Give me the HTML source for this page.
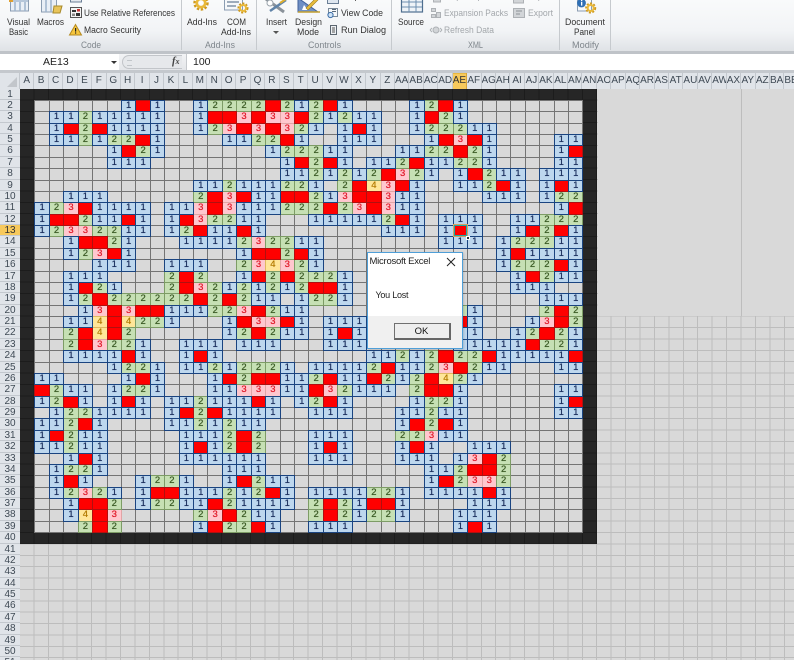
<!DOCTYPE html>
<html><head><meta charset="utf-8"><title>Excel Minesweeper</title>
<style>
html,body{margin:0;padding:0;width:794px;height:660px;overflow:hidden;background:#d6d9dd;font-family:"Liberation Sans",sans-serif}
#w{position:relative;width:794px;height:660px;overflow:hidden;filter:blur(.3px)}
.ab{position:absolute}
svg text{font-family:"Liberation Sans",sans-serif;font-size:9.5px;fill:#333}
svg text.g{fill:#7f868c}
svg text.d{fill:#a3a7ab}
#ch{position:absolute;left:20px;top:73px;width:780px;height:15.5px;display:grid;grid-template-columns:repeat(54,14.43px);background:#e0e4e9}
#ch span{font-size:10px;line-height:15px;text-align:center;color:#3f4a55;border-right:1px solid #c3c8ce;overflow:hidden;box-sizing:border-box;white-space:nowrap}
#ch span.h{background:#f7c95c;color:#333;border-right:1px solid #d6a53a;box-shadow:inset 0 1px #e8b840}
#rh{position:absolute;left:0;top:88.5px;width:20px;display:grid;grid-template-rows:repeat(51,11.385px);background:#e0e4e9}
#rh span{font-size:10px;line-height:11px;text-align:center;color:#3f4a55;border-bottom:1px solid #c3c8ce;box-sizing:border-box;overflow:hidden}
#rh span.h{background:#f7c95c;color:#333}
#sheet{position:absolute;left:20px;top:88.5px;width:774px;height:572px;background-color:#d9d9d9;background-image:repeating-linear-gradient(90deg,transparent 0,transparent 13.43px,#bdbdbd 13.43px,#bdbdbd 14.43px),repeating-linear-gradient(180deg,transparent 0,transparent 10.385px,#bdbdbd 10.385px,#bdbdbd 11.385px)}
#frame{position:absolute;left:20px;top:88.5px;width:577.2px;height:455.4px;background-color:#262626;background-image:repeating-linear-gradient(90deg,transparent 0,transparent 13.43px,#1c1c1c 13.43px,#1c1c1c 14.43px),repeating-linear-gradient(180deg,transparent 0,transparent 10.385px,#1c1c1c 10.385px,#1c1c1c 11.385px)}
#g{position:absolute;left:34.43px;top:99.885px;width:549px}
.r{display:grid;grid-template-columns:repeat(38,14.43px);grid-template-rows:11.385px;height:11.385px}
.r>*{display:block;margin:0 -1px -1px 0;box-sizing:border-box;border:1px solid #747474;font-size:9.5px;line-height:9.4px;text-align:center;font-style:normal;font-weight:400;text-decoration:none;position:relative;background:#d9d9d9;overflow:hidden;text-shadow:0 0 .5px currentColor}
.r a{background:#bdd7ee;border-color:#1a4480;color:#1b2f5e;z-index:4}
.r b{background:#c6e0b4;border-color:#7d9c66;color:#3a5a24;z-index:2}
.r s{background:#ffc7ce;border-color:#e0a5a5;color:#e01a2a;z-index:1}
.r u{background:#ffe699;border-color:#e0b860;color:#b27a00;z-index:1}
.r i{background:#ff0000;border-color:#b01010;z-index:3}
</style></head><body><div id="w">

<div class="ab" style="left:0;top:0;width:794px;height:51px;background:linear-gradient(#f9fafb,#f2f4f6 60%,#dfe2e6)"></div>
<div class="ab" style="left:0;top:51px;width:794px;height:3px;background:#bfc3c8"></div>
<svg class="ab" style="left:0;top:0" width="794" height="51" viewBox="0 0 794 51">
<g stroke="#c6cace" stroke-width="1"><path d="M181.5 0V50M256.5 0V50M391.5 0V50M559.5 0V50M610.5 0V50"/></g>
<rect x="10.5" y="-3" width="18" height="14" fill="#e9eff6" stroke="#8b9db2"/><path d="M15 0V11M20 0V11M25 0V11" stroke="#9db3cc" stroke-width="1.5"/><path d="M10 1H28" stroke="#b6c7da" stroke-width="2"/><rect x="9" y="0" width="4" height="2" fill="#e0a030"/>
<rect x="41.5" y="-3" width="15" height="15" fill="#e9eff6" stroke="#8b9db2"/><path d="M46 0V12M51 0V12" stroke="#9db3cc" stroke-width="1.5"/><path d="M54 6H62L60 13H53Z" fill="#e8c45a" stroke="#a88a2a"/>
<rect x="70.5" y="7.5" width="11" height="10" fill="#f4f4f4" stroke="#555"/><path d="M72 10H76V12H72ZM76 13H80V16H76Z" fill="#333"/><rect x="77" y="9" width="3" height="2.5" fill="#c83030"/><rect x="72" y="13.5" width="3" height="2.5" fill="#888"/>
<path d="M75.5 24.5L81.5 35H69.5Z" fill="#f6c63e" stroke="#b58a20"/><rect x="75" y="28" width="1.2" height="3.6" fill="#222"/><rect x="75" y="32.4" width="1.2" height="1.2" fill="#222"/>
<circle cx="201" cy="3" r="6.5" fill="none" stroke="#cf9a1e" stroke-width="2.4" stroke-dasharray="2.4 1.6"/><circle cx="201" cy="3" r="4.2" fill="none" stroke="#e9b93a" stroke-width="2.6"/><circle cx="201" cy="3" r="1.8" fill="#fff"/>
<rect x="224.5" y="-3" width="18" height="13" fill="#f6f8fa" stroke="#8b9db2"/><path d="M227 2H239M227 6H236" stroke="#6a7f96" stroke-width="1.2"/><circle cx="243" cy="8" r="4.5" fill="none" stroke="#cf9a1e" stroke-width="2" stroke-dasharray="2 1.4"/><circle cx="243" cy="8" r="3" fill="none" stroke="#e9b93a" stroke-width="2"/>
<path d="M266 -1L284 12" stroke="#8a929a" stroke-width="3"/><path d="M286 0L270 11" stroke="#5f83a8" stroke-width="2.5"/><circle cx="270" cy="3" r="3" fill="#fff" stroke="#9aa3ab"/><path d="M280 3L286 -1" stroke="#e0b030" stroke-width="2"/>
<path d="M298 -2L298 12H318Z" fill="#6f8fc4" stroke="#40609a"/><path d="M302 10L304 5L308 10Z" fill="#fff"/><path d="M306 8L316 -2L318 0L308 10Z" fill="#e7bc3c" stroke="#9b7a1c" stroke-width=".6"/><path d="M298 12H320" stroke="#c4a030" stroke-width="1.5"/>
<rect x="327.5" y="-3" width="11" height="6.5" fill="#dfe7f0" stroke="#6b7f96"/>
<rect x="328.5" y="8.5" width="9" height="8" fill="#f6f8fa" stroke="#7a8a9a"/><circle cx="330.5" cy="15" r="2.6" fill="#cfe2f5" stroke="#3c6ea8"/><path d="M332 9.5H336M332 11.5H336" stroke="#5a6a7a"/>
<rect x="330.5" y="25.5" width="6" height="9" fill="#eef1f4" stroke="#5c6670"/><path d="M332 28H335M332 30H335M332 32H335" stroke="#555"/>
<rect x="401.5" y="-3" width="21" height="15" fill="#eef3f8" stroke="#4f6f8f" stroke-width="1.2"/><path d="M402 2H422M402 7H422M409 -3V12M416 -3V12" stroke="#6d8fb0"/>
<g stroke="#adb1b5" fill="#d2d5d8"><rect x="431.5" y="8.5" width="4" height="3"/><rect x="436.5" y="12.5" width="4" height="5"/><rect x="431.5" y="14.5" width="4" height="3"/><rect x="433.5" y="-3" width="7" height="5"/><rect x="513.5" y="8.5" width="11" height="9"/><circle cx="436" cy="30" r="3"/><rect x="513.5" y="-3" width="10" height="6"/></g>
<path d="M430 30L432 28M430 30L432 32M442 30L440 28M442 30L440 32" stroke="#adb1b5" fill="none"/>
<path d="M516 11H522M516 14H520" stroke="#8f9397"/>
<text x="444" y="-1" class="d" textLength="60" lengthAdjust="spacingAndGlyphs">Map Properties</text>
<text x="528" y="-1" class="d" textLength="25" lengthAdjust="spacingAndGlyphs">Import</text>
<text x="341" y="-1" textLength="40" lengthAdjust="spacingAndGlyphs">Properties</text>
<rect x="70.5" y="-4" width="11" height="6" fill="#e5e9ee" stroke="#6b7f96"/>
<rect x="577.5" y="-3" width="14" height="14" fill="#f6f8fa" stroke="#8b9db2"/><circle cx="581.5" cy="3" r="4.4" fill="#2f6fb5"/><rect x="581" y="2" width="1.3" height="3.6" fill="#fff"/><rect x="581" y="0" width="1.3" height="1.2" fill="#fff"/><circle cx="590.7" cy="8" r="4.5" fill="none" stroke="#cf9a1e" stroke-width="2" stroke-dasharray="2 1.4"/><circle cx="590.7" cy="8" r="3" fill="none" stroke="#e9b93a" stroke-width="2"/>
<path d="M273 31H279L276 34Z" fill="#555"/>
<text x="7" y="25" textLength="23" lengthAdjust="spacingAndGlyphs">Visual</text>
<text x="9" y="35" textLength="19" lengthAdjust="spacingAndGlyphs">Basic</text>
<text x="37" y="25" textLength="27" lengthAdjust="spacingAndGlyphs">Macros</text>
<text x="84" y="16" textLength="91" lengthAdjust="spacingAndGlyphs">Use Relative References</text>
<text x="84" y="33" textLength="57" lengthAdjust="spacingAndGlyphs">Macro Security</text>
<text x="81" y="48" class="g" textLength="20" lengthAdjust="spacingAndGlyphs">Code</text>
<text x="187" y="25" textLength="30" lengthAdjust="spacingAndGlyphs">Add-Ins</text>
<text x="227" y="25" textLength="19" lengthAdjust="spacingAndGlyphs">COM</text>
<text x="221" y="35" textLength="30" lengthAdjust="spacingAndGlyphs">Add-Ins</text>
<text x="205" y="48" class="g" textLength="30" lengthAdjust="spacingAndGlyphs">Add-Ins</text>
<text x="266" y="25" textLength="21" lengthAdjust="spacingAndGlyphs">Insert</text>
<text x="295" y="25" textLength="27" lengthAdjust="spacingAndGlyphs">Design</text>
<text x="297" y="35" textLength="22" lengthAdjust="spacingAndGlyphs">Mode</text>
<text x="341" y="16" textLength="42" lengthAdjust="spacingAndGlyphs">View Code</text>
<text x="341" y="33" textLength="45" lengthAdjust="spacingAndGlyphs">Run Dialog</text>
<text x="308" y="48" class="g" textLength="33" lengthAdjust="spacingAndGlyphs">Controls</text>
<text x="398" y="25" textLength="26" lengthAdjust="spacingAndGlyphs">Source</text>
<text x="444" y="16" class="d" textLength="64" lengthAdjust="spacingAndGlyphs">Expansion Packs</text>
<text x="528" y="16" class="d" textLength="25" lengthAdjust="spacingAndGlyphs">Export</text>
<text x="444" y="33" class="d" textLength="50" lengthAdjust="spacingAndGlyphs">Refresh Data</text>
<text x="468" y="48" class="g" textLength="15" lengthAdjust="spacingAndGlyphs">XML</text>
<text x="565" y="25" textLength="40" lengthAdjust="spacingAndGlyphs">Document</text>
<text x="574" y="35" textLength="21" lengthAdjust="spacingAndGlyphs">Panel</text>
<text x="572" y="48" class="g" textLength="27" lengthAdjust="spacingAndGlyphs">Modify</text>
</svg>

<div class="ab" style="left:0;top:54px;width:794px;height:16px;background:#fff"></div>
<div class="ab" style="left:119px;top:54px;width:67px;height:16px;background:linear-gradient(#f2f3f5,#e4e6e9)"></div>
<div class="ab" style="left:122px;top:55px;width:60px;height:14px;border-radius:7px 0 0 7px;border:1px solid #c2c5c9;border-right:0;background:#e6e8eb;box-sizing:border-box"></div>
<div class="ab" style="left:127px;top:59.5px;width:5px;height:4px;border-top:1px solid #c2c6ca;border-bottom:1px solid #c2c6ca"></div>
<div class="ab" style="left:43px;top:55px;width:24px;font-size:10.5px;line-height:15px;color:#222">AE13</div>
<div class="ab" style="left:111px;top:61px;width:0;height:0;border:3px solid transparent;border-top:3.5px solid #333"></div>
<div class="ab" style="left:172px;top:55px;font:italic bold 10.5px/14px 'Liberation Serif',serif;color:#444">f<span style="font-size:8px">x</span></div>
<div class="ab" style="left:186px;top:54px;width:1px;height:16px;background:#c6c9cd"></div>
<div class="ab" style="left:193px;top:55px;font-size:10.5px;line-height:15px;color:#222">100</div>
<div class="ab" style="left:0;top:70px;width:794px;height:3px;background:#c4c8cd"></div>

<div id="ch"><span>A</span><span>B</span><span>C</span><span>D</span><span>E</span><span>F</span><span>G</span><span>H</span><span>I</span><span>J</span><span>K</span><span>L</span><span>M</span><span>N</span><span>O</span><span>P</span><span>Q</span><span>R</span><span>S</span><span>T</span><span>U</span><span>V</span><span>W</span><span>X</span><span>Y</span><span>Z</span><span>AA</span><span>AB</span><span>AC</span><span>AD</span><span class="h">AE</span><span>AF</span><span>AG</span><span>AH</span><span>AI</span><span>AJ</span><span>AK</span><span>AL</span><span>AM</span><span>AN</span><span>AO</span><span>AP</span><span>AQ</span><span>AR</span><span>AS</span><span>AT</span><span>AU</span><span>AV</span><span>AW</span><span>AX</span><span>AY</span><span>AZ</span><span>BA</span><span>BB</span></div>
<div class="ab" style="left:0;top:73px;width:20px;height:15.5px;background:#e0e4e9;border-right:1px solid #c3c8ce;box-sizing:border-box"></div>
<div class="ab" style="left:7px;top:77px;width:0;height:0;border-left:10px solid transparent;border-bottom:10px solid #c2c6cb"></div>
<div id="rh"><span>1</span><span>2</span><span>3</span><span>4</span><span>5</span><span>6</span><span>7</span><span>8</span><span>9</span><span>10</span><span>11</span><span>12</span><span class="h">13</span><span>14</span><span>15</span><span>16</span><span>17</span><span>18</span><span>19</span><span>20</span><span>21</span><span>22</span><span>23</span><span>24</span><span>25</span><span>26</span><span>27</span><span>28</span><span>29</span><span>30</span><span>31</span><span>32</span><span>33</span><span>34</span><span>35</span><span>36</span><span>37</span><span>38</span><span>39</span><span>40</span><span>41</span><span>42</span><span>43</span><span>44</span><span>45</span><span>46</span><span>47</span><span>48</span><span>49</span><span>50</span><span>51</span></div>

<div id="sheet"></div>
<div class="ab" style="left:598px;top:88.5px;width:196px;height:227.7px;background:#d9d9d9"></div>
<div class="ab" style="left:741px;top:88.5px;width:1px;height:227.7px;background:#bdbdbd"></div>
<div id="frame"></div>

<div id="g">
<div class="r"><p></p><p></p><p></p><p></p><p></p><p></p><a>1</a><i></i><a>1</a><p></p><p></p><a>1</a><b>2</b><b>2</b><b>2</b><b>2</b><i></i><b>2</b><a>1</a><b>2</b><i></i><a>1</a><p></p><p></p><p></p><p></p><a>1</a><b>2</b><i></i><a>1</a><p></p><p></p><p></p><p></p><p></p><p></p><p></p><p></p></div>
<div class="r"><p></p><a>1</a><a>1</a><b>2</b><a>1</a><a>1</a><a>1</a><a>1</a><a>1</a><p></p><p></p><a>1</a><i></i><i></i><s>3</s><i></i><s>3</s><s>3</s><i></i><b>2</b><a>1</a><b>2</b><a>1</a><a>1</a><p></p><p></p><a>1</a><i></i><b>2</b><a>1</a><p></p><p></p><p></p><p></p><p></p><p></p><p></p><p></p></div>
<div class="r"><p></p><a>1</a><i></i><b>2</b><i></i><a>1</a><a>1</a><a>1</a><a>1</a><p></p><p></p><a>1</a><b>2</b><s>3</s><i></i><s>3</s><i></i><s>3</s><b>2</b><a>1</a><p></p><a>1</a><i></i><a>1</a><p></p><p></p><a>1</a><b>2</b><b>2</b><b>2</b><a>1</a><a>1</a><p></p><p></p><p></p><p></p><p></p><p></p></div>
<div class="r"><p></p><a>1</a><a>1</a><b>2</b><a>1</a><b>2</b><b>2</b><i></i><a>1</a><p></p><p></p><p></p><p></p><a>1</a><a>1</a><b>2</b><b>2</b><i></i><a>1</a><p></p><p></p><a>1</a><a>1</a><a>1</a><p></p><p></p><p></p><a>1</a><i></i><s>3</s><i></i><a>1</a><p></p><p></p><p></p><p></p><a>1</a><a>1</a></div>
<div class="r"><p></p><p></p><p></p><p></p><p></p><a>1</a><i></i><b>2</b><a>1</a><p></p><p></p><p></p><p></p><p></p><p></p><p></p><a>1</a><b>2</b><b>2</b><b>2</b><a>1</a><a>1</a><p></p><p></p><p></p><a>1</a><a>1</a><b>2</b><b>2</b><i></i><b>2</b><a>1</a><p></p><p></p><p></p><p></p><a>1</a><i></i></div>
<div class="r"><p></p><p></p><p></p><p></p><p></p><a>1</a><a>1</a><a>1</a><p></p><p></p><p></p><p></p><p></p><p></p><p></p><p></p><p></p><a>1</a><i></i><b>2</b><i></i><a>1</a><p></p><a>1</a><a>1</a><b>2</b><i></i><a>1</a><a>1</a><b>2</b><b>2</b><a>1</a><p></p><p></p><p></p><p></p><a>1</a><a>1</a></div>
<div class="r"><p></p><p></p><p></p><p></p><p></p><p></p><p></p><p></p><p></p><p></p><p></p><p></p><p></p><p></p><p></p><p></p><p></p><a>1</a><a>1</a><b>2</b><a>1</a><b>2</b><a>1</a><b>2</b><i></i><s>3</s><b>2</b><a>1</a><p></p><a>1</a><i></i><b>2</b><a>1</a><a>1</a><p></p><a>1</a><a>1</a><a>1</a></div>
<div class="r"><p></p><p></p><p></p><p></p><p></p><p></p><p></p><p></p><p></p><p></p><p></p><a>1</a><a>1</a><b>2</b><a>1</a><a>1</a><a>1</a><b>2</b><b>2</b><a>1</a><p></p><b>2</b><i></i><u>4</u><s>3</s><i></i><a>1</a><p></p><p></p><a>1</a><a>1</a><b>2</b><i></i><a>1</a><p></p><a>1</a><i></i><a>1</a></div>
<div class="r"><p></p><p></p><a>1</a><a>1</a><a>1</a><p></p><p></p><p></p><p></p><p></p><p></p><b>2</b><i></i><s>3</s><i></i><a>1</a><a>1</a><i></i><i></i><b>2</b><a>1</a><s>3</s><i></i><i></i><s>3</s><a>1</a><a>1</a><p></p><p></p><p></p><p></p><a>1</a><a>1</a><a>1</a><p></p><a>1</a><b>2</b><b>2</b></div>
<div class="r"><a>1</a><b>2</b><s>3</s><i></i><a>1</a><a>1</a><a>1</a><a>1</a><p></p><a>1</a><a>1</a><s>3</s><i></i><s>3</s><a>1</a><a>1</a><a>1</a><b>2</b><b>2</b><b>2</b><i></i><b>2</b><s>3</s><i></i><s>3</s><a>1</a><a>1</a><p></p><p></p><p></p><p></p><p></p><p></p><p></p><p></p><p></p><a>1</a><i></i></div>
<div class="r"><a>1</a><i></i><i></i><b>2</b><a>1</a><a>1</a><i></i><a>1</a><p></p><a>1</a><i></i><s>3</s><b>2</b><b>2</b><a>1</a><a>1</a><p></p><p></p><p></p><a>1</a><a>1</a><a>1</a><a>1</a><a>1</a><b>2</b><i></i><a>1</a><p></p><a>1</a><a>1</a><a>1</a><p></p><p></p><a>1</a><a>1</a><b>2</b><b>2</b><b>2</b></div>
<div class="r"><a>1</a><b>2</b><s>3</s><s>3</s><b>2</b><b>2</b><a>1</a><a>1</a><p></p><a>1</a><b>2</b><i></i><a>1</a><a>1</a><i></i><a>1</a><p></p><p></p><p></p><p></p><p></p><p></p><p></p><p></p><a>1</a><a>1</a><a>1</a><p></p><a>1</a><i></i><a>1</a><p></p><p></p><a>1</a><i></i><b>2</b><i></i><a>1</a></div>
<div class="r"><p></p><p></p><a>1</a><i></i><i></i><b>2</b><a>1</a><p></p><p></p><p></p><a>1</a><a>1</a><a>1</a><a>1</a><b>2</b><s>3</s><b>2</b><b>2</b><a>1</a><a>1</a><p></p><p></p><p></p><p></p><p></p><p></p><p></p><p></p><a>1</a><a>1</a><a>1</a><p></p><a>1</a><b>2</b><b>2</b><b>2</b><a>1</a><a>1</a></div>
<div class="r"><p></p><p></p><a>1</a><b>2</b><s>3</s><i></i><a>1</a><p></p><p></p><p></p><p></p><p></p><p></p><p></p><a>1</a><i></i><i></i><b>2</b><i></i><a>1</a><p></p><p></p><p></p><p></p><p></p><p></p><p></p><p></p><p></p><p></p><p></p><p></p><a>1</a><i></i><a>1</a><a>1</a><a>1</a><a>1</a></div>
<div class="r"><p></p><p></p><p></p><p></p><a>1</a><a>1</a><a>1</a><p></p><p></p><a>1</a><a>1</a><a>1</a><p></p><p></p><b>2</b><s>3</s><u>4</u><s>3</s><b>2</b><a>1</a><p></p><p></p><p></p><p></p><p></p><p></p><p></p><p></p><p></p><p></p><p></p><p></p><a>1</a><b>2</b><b>2</b><b>2</b><i></i><a>1</a></div>
<div class="r"><p></p><p></p><a>1</a><a>1</a><a>1</a><p></p><p></p><p></p><p></p><b>2</b><i></i><b>2</b><p></p><p></p><a>1</a><i></i><b>2</b><i></i><b>2</b><b>2</b><b>2</b><a>1</a><p></p><p></p><p></p><p></p><p></p><p></p><p></p><p></p><p></p><p></p><p></p><a>1</a><i></i><b>2</b><a>1</a><a>1</a></div>
<div class="r"><p></p><p></p><a>1</a><i></i><b>2</b><a>1</a><p></p><p></p><p></p><b>2</b><i></i><s>3</s><b>2</b><a>1</a><b>2</b><a>1</a><b>2</b><a>1</a><b>2</b><i></i><i></i><a>1</a><p></p><p></p><p></p><p></p><p></p><p></p><p></p><p></p><p></p><p></p><p></p><a>1</a><a>1</a><a>1</a><p></p><p></p></div>
<div class="r"><p></p><p></p><a>1</a><b>2</b><i></i><b>2</b><b>2</b><b>2</b><b>2</b><b>2</b><b>2</b><i></i><b>2</b><i></i><b>2</b><a>1</a><a>1</a><p></p><a>1</a><b>2</b><b>2</b><a>1</a><p></p><p></p><p></p><p></p><p></p><p></p><p></p><p></p><p></p><p></p><p></p><p></p><p></p><a>1</a><a>1</a><a>1</a></div>
<div class="r"><p></p><p></p><p></p><a>1</a><s>3</s><i></i><s>3</s><i></i><i></i><a>1</a><a>1</a><a>1</a><b>2</b><b>2</b><s>3</s><i></i><b>2</b><a>1</a><a>1</a><p></p><p></p><p></p><p></p><p></p><p></p><p></p><p></p><p></p><p></p><b>2</b><a>1</a><p></p><p></p><p></p><p></p><b>2</b><i></i><b>2</b></div>
<div class="r"><p></p><p></p><a>1</a><a>1</a><u>4</u><i></i><u>4</u><b>2</b><b>2</b><a>1</a><p></p><p></p><p></p><a>1</a><i></i><s>3</s><s>3</s><i></i><a>1</a><p></p><a>1</a><a>1</a><a>1</a><p></p><p></p><p></p><p></p><p></p><p></p><i></i><a>1</a><p></p><p></p><p></p><a>1</a><s>3</s><i></i><b>2</b></div>
<div class="r"><p></p><p></p><b>2</b><i></i><u>4</u><i></i><b>2</b><p></p><p></p><p></p><p></p><p></p><p></p><a>1</a><b>2</b><i></i><b>2</b><a>1</a><a>1</a><p></p><a>1</a><i></i><a>1</a><p></p><p></p><p></p><p></p><p></p><p></p><a>1</a><a>1</a><p></p><p></p><a>1</a><b>2</b><i></i><b>2</b><a>1</a></div>
<div class="r"><p></p><p></p><b>2</b><i></i><s>3</s><b>2</b><b>2</b><a>1</a><p></p><p></p><a>1</a><a>1</a><a>1</a><p></p><a>1</a><a>1</a><a>1</a><p></p><p></p><p></p><a>1</a><a>1</a><a>1</a><p></p><p></p><p></p><p></p><p></p><p></p><a>1</a><a>1</a><a>1</a><a>1</a><a>1</a><i></i><b>2</b><b>2</b><a>1</a></div>
<div class="r"><p></p><p></p><a>1</a><a>1</a><a>1</a><a>1</a><i></i><a>1</a><p></p><p></p><a>1</a><i></i><a>1</a><p></p><p></p><p></p><p></p><p></p><p></p><p></p><p></p><p></p><p></p><a>1</a><a>1</a><b>2</b><a>1</a><b>2</b><i></i><b>2</b><b>2</b><i></i><a>1</a><a>1</a><a>1</a><a>1</a><a>1</a><i></i></div>
<div class="r"><p></p><p></p><p></p><p></p><p></p><a>1</a><b>2</b><b>2</b><a>1</a><p></p><a>1</a><a>1</a><b>2</b><a>1</a><b>2</b><b>2</b><b>2</b><a>1</a><p></p><a>1</a><a>1</a><a>1</a><a>1</a><b>2</b><i></i><a>1</a><a>1</a><b>2</b><s>3</s><i></i><b>2</b><a>1</a><a>1</a><p></p><p></p><p></p><a>1</a><a>1</a></div>
<div class="r"><a>1</a><a>1</a><p></p><p></p><p></p><p></p><a>1</a><i></i><a>1</a><p></p><p></p><p></p><a>1</a><i></i><b>2</b><i></i><i></i><a>1</a><a>1</a><b>2</b><i></i><a>1</a><a>1</a><i></i><b>2</b><a>1</a><b>2</b><i></i><u>4</u><b>2</b><a>1</a><p></p><p></p><p></p><p></p><p></p><p></p><p></p></div>
<div class="r"><i></i><b>2</b><a>1</a><a>1</a><p></p><a>1</a><b>2</b><b>2</b><a>1</a><p></p><p></p><p></p><a>1</a><a>1</a><s>3</s><s>3</s><s>3</s><a>1</a><a>1</a><i></i><s>3</s><b>2</b><a>1</a><a>1</a><a>1</a><p></p><b>2</b><i></i><i></i><a>1</a><p></p><p></p><p></p><p></p><p></p><p></p><a>1</a><a>1</a></div>
<div class="r"><a>1</a><b>2</b><i></i><a>1</a><p></p><a>1</a><i></i><a>1</a><p></p><a>1</a><a>1</a><b>2</b><a>1</a><a>1</a><a>1</a><i></i><a>1</a><p></p><a>1</a><b>2</b><i></i><a>1</a><p></p><p></p><p></p><p></p><a>1</a><b>2</b><b>2</b><a>1</a><p></p><p></p><p></p><p></p><p></p><p></p><a>1</a><i></i></div>
<div class="r"><p></p><a>1</a><b>2</b><b>2</b><a>1</a><a>1</a><a>1</a><a>1</a><p></p><a>1</a><i></i><b>2</b><i></i><a>1</a><a>1</a><a>1</a><a>1</a><p></p><p></p><a>1</a><a>1</a><a>1</a><p></p><p></p><p></p><a>1</a><a>1</a><b>2</b><a>1</a><a>1</a><p></p><p></p><p></p><p></p><p></p><p></p><a>1</a><a>1</a></div>
<div class="r"><a>1</a><a>1</a><b>2</b><i></i><a>1</a><p></p><p></p><p></p><p></p><a>1</a><a>1</a><b>2</b><a>1</a><b>2</b><a>1</a><a>1</a><p></p><p></p><p></p><p></p><p></p><p></p><p></p><p></p><p></p><a>1</a><i></i><b>2</b><i></i><a>1</a><p></p><p></p><p></p><p></p><p></p><p></p><p></p><p></p></div>
<div class="r"><a>1</a><i></i><b>2</b><a>1</a><a>1</a><p></p><p></p><p></p><p></p><p></p><a>1</a><a>1</a><a>1</a><b>2</b><i></i><b>2</b><p></p><p></p><p></p><a>1</a><a>1</a><a>1</a><p></p><p></p><p></p><b>2</b><b>2</b><s>3</s><a>1</a><a>1</a><p></p><p></p><p></p><p></p><p></p><p></p><p></p><p></p></div>
<div class="r"><a>1</a><a>1</a><b>2</b><a>1</a><a>1</a><p></p><p></p><p></p><p></p><p></p><a>1</a><i></i><a>1</a><b>2</b><i></i><b>2</b><p></p><p></p><p></p><a>1</a><i></i><a>1</a><p></p><p></p><p></p><a>1</a><i></i><a>1</a><p></p><p></p><a>1</a><a>1</a><a>1</a><p></p><p></p><p></p><p></p><p></p></div>
<div class="r"><p></p><p></p><a>1</a><i></i><a>1</a><p></p><p></p><p></p><p></p><p></p><a>1</a><a>1</a><a>1</a><a>1</a><a>1</a><a>1</a><p></p><p></p><p></p><a>1</a><a>1</a><a>1</a><p></p><p></p><p></p><a>1</a><a>1</a><a>1</a><p></p><a>1</a><s>3</s><i></i><b>2</b><p></p><p></p><p></p><p></p><p></p></div>
<div class="r"><p></p><a>1</a><b>2</b><b>2</b><a>1</a><p></p><p></p><p></p><p></p><p></p><p></p><p></p><p></p><a>1</a><a>1</a><a>1</a><p></p><p></p><p></p><p></p><p></p><p></p><p></p><p></p><p></p><p></p><p></p><a>1</a><a>1</a><b>2</b><i></i><i></i><b>2</b><p></p><p></p><p></p><p></p><p></p></div>
<div class="r"><p></p><a>1</a><i></i><a>1</a><p></p><p></p><p></p><a>1</a><b>2</b><b>2</b><a>1</a><p></p><p></p><a>1</a><i></i><b>2</b><a>1</a><a>1</a><p></p><p></p><p></p><p></p><p></p><p></p><p></p><p></p><p></p><a>1</a><i></i><b>2</b><s>3</s><s>3</s><b>2</b><p></p><p></p><p></p><p></p><p></p></div>
<div class="r"><p></p><a>1</a><b>2</b><s>3</s><b>2</b><a>1</a><p></p><a>1</a><i></i><i></i><a>1</a><a>1</a><a>1</a><b>2</b><a>1</a><b>2</b><i></i><a>1</a><p></p><a>1</a><a>1</a><a>1</a><a>1</a><b>2</b><b>2</b><a>1</a><p></p><a>1</a><a>1</a><a>1</a><a>1</a><i></i><a>1</a><p></p><p></p><p></p><p></p><p></p></div>
<div class="r"><p></p><p></p><a>1</a><i></i><i></i><b>2</b><p></p><a>1</a><b>2</b><b>2</b><a>1</a><a>1</a><i></i><b>2</b><a>1</a><a>1</a><a>1</a><a>1</a><p></p><b>2</b><i></i><b>2</b><a>1</a><i></i><i></i><a>1</a><p></p><p></p><p></p><p></p><a>1</a><a>1</a><a>1</a><p></p><p></p><p></p><p></p><p></p></div>
<div class="r"><p></p><p></p><a>1</a><u>4</u><i></i><s>3</s><p></p><p></p><p></p><p></p><p></p><b>2</b><s>3</s><i></i><b>2</b><a>1</a><a>1</a><p></p><p></p><b>2</b><i></i><b>2</b><a>1</a><b>2</b><b>2</b><a>1</a><p></p><p></p><p></p><a>1</a><a>1</a><a>1</a><p></p><p></p><p></p><p></p><p></p><p></p></div>
<div class="r"><p></p><p></p><p></p><b>2</b><i></i><b>2</b><p></p><p></p><p></p><p></p><p></p><a>1</a><i></i><b>2</b><b>2</b><i></i><a>1</a><p></p><p></p><a>1</a><a>1</a><a>1</a><p></p><p></p><p></p><p></p><p></p><p></p><p></p><a>1</a><i></i><a>1</a><p></p><p></p><p></p><p></p><p></p><p></p></div>
</div>

<div class="ab" style="left:452.7px;top:224.4px;width:15px;height:13px;border:1px solid #d4a060;box-sizing:border-box;z-index:6"></div>
<div class="ab" style="left:453.7px;top:225.4px;width:13px;height:11px;border:1px solid #1fa9a4;box-sizing:border-box;z-index:6"></div>
<div class="ab" style="left:466px;top:235.5px;width:2px;height:2px;background:#2a3a3a;border:1px solid #fff;box-sizing:content-box;z-index:6"></div>

<div class="ab" style="left:366.5px;top:251.5px;width:96px;height:97px;background:#fff;border:1px solid #4f9fd8;box-sizing:border-box;z-index:8;box-shadow:1px 1px 2px rgba(0,0,0,.15)">
  <div class="ab" style="left:2px;top:3px;font-size:9.5px;letter-spacing:-.25px;line-height:12px;color:#222;white-space:nowrap">Microsoft Excel</div>
  <svg class="ab" style="left:78px;top:4px" width="10" height="10" viewBox="0 0 10 10"><path d="M1 1L9 9M9 1L1 9" stroke="#222" stroke-width="1" fill="none"/></svg>
  <div class="ab" style="left:8px;top:36px;font-size:9px;letter-spacing:-.25px;line-height:12px;color:#222;white-space:nowrap">You Lost</div>
  <div class="ab" style="left:0;top:63px;width:94px;height:32px;background:#f0f0f0"></div>
  <div class="ab" style="left:26px;top:70px;width:57px;height:17.5px;background:#eee;border:1px solid #707070;border-right:2px solid #666;border-bottom:2px solid #666;box-sizing:border-box;font-size:9.5px;line-height:15px;text-align:center;color:#111">OK</div>
</div>
</div></body></html>
